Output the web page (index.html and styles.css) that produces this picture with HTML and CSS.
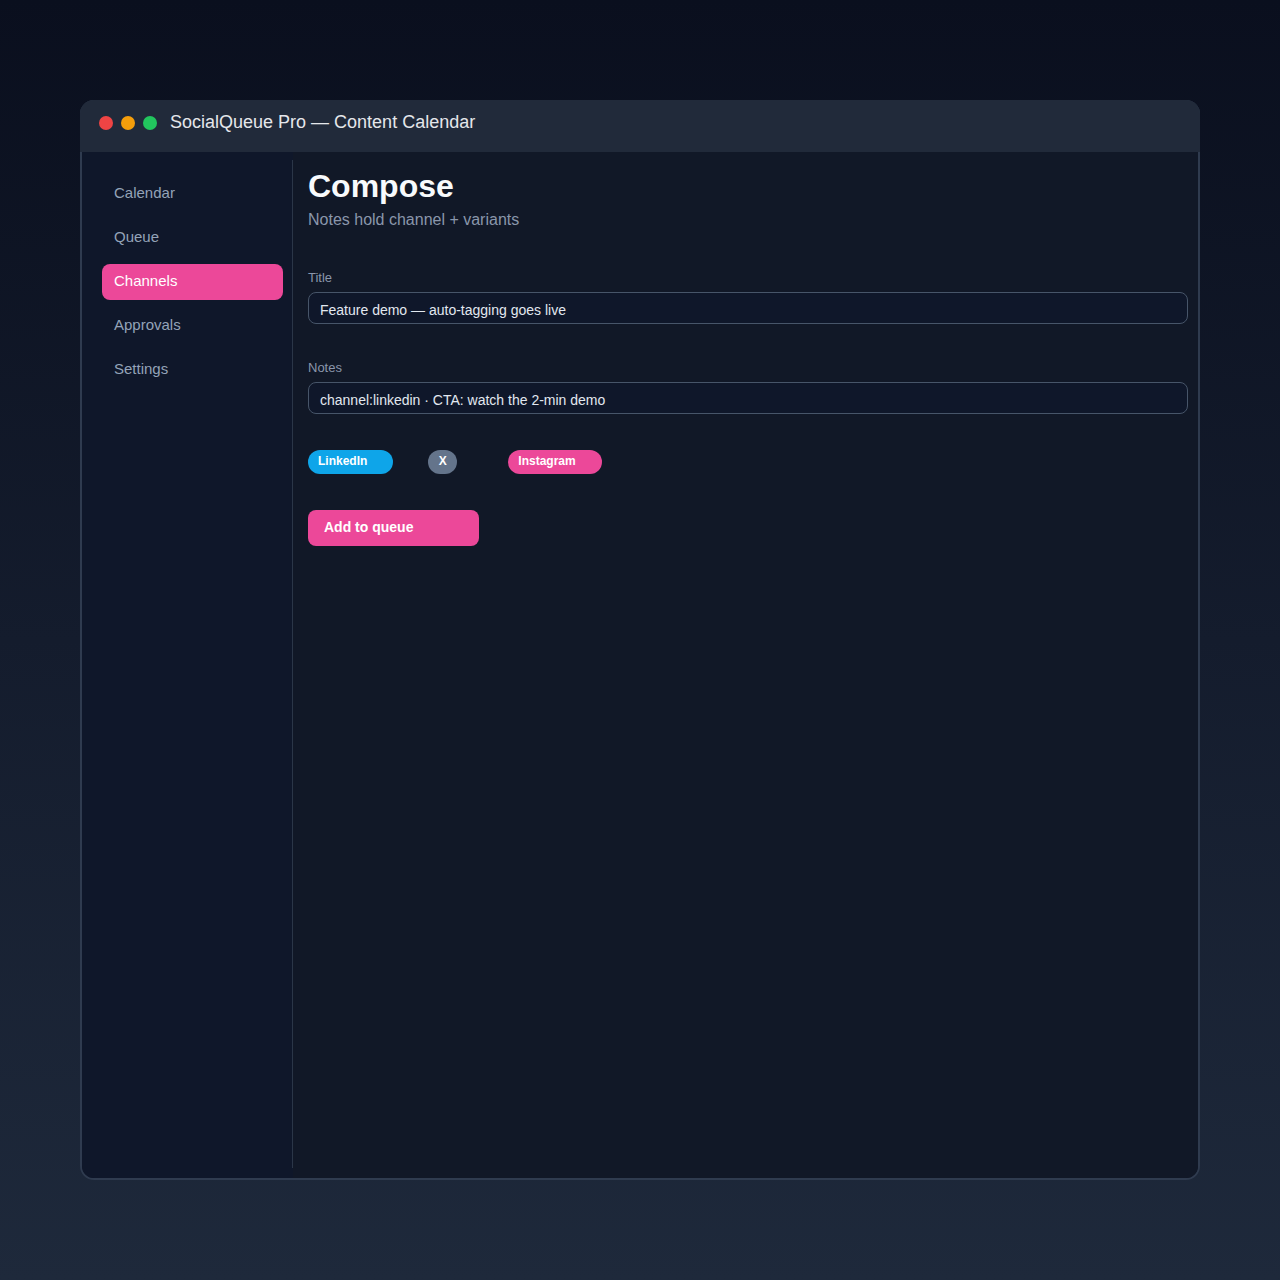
FILE: index.html
```html
<!DOCTYPE html>
<html lang="en">
<head>
<meta charset="utf-8">
<title>SocialQueue Pro — Content Calendar</title>
<link rel="stylesheet" href="styles.css">
</head>
<body>
<div class="window">
  <div class="titlebar">
    <span class="dot dot-red"></span>
    <span class="dot dot-yellow"></span>
    <span class="dot dot-green"></span>
    <span class="title">SocialQueue Pro — Content Calendar</span>
  </div>
  <div class="window-body">
    <aside class="sidebar">
      <nav class="nav">
        <div class="nav-item">Calendar</div>
        <div class="nav-item">Queue</div>
        <div class="nav-item active">Channels</div>
        <div class="nav-item">Approvals</div>
        <div class="nav-item">Settings</div>
      </nav>
    </aside>
    <main class="main">
      <header class="page-head">
        <h1 class="page-title">Compose</h1>
        <p class="page-sub">Notes hold channel + variants</p>
      </header>
      <div class="field">
        <label class="field-label">Title</label>
        <div class="input">Feature demo — auto-tagging goes live</div>
      </div>
      <div class="field">
        <label class="field-label">Notes</label>
        <div class="input">channel:linkedin · CTA: watch the 2-min demo</div>
      </div>
      <div class="chips">
        <span class="chip chip-linkedin">LinkedIn</span>
        <span class="chip chip-x">X</span>
        <span class="chip chip-instagram">Instagram</span>
      </div>
      <div class="actions">
        <button class="btn-primary">Add to queue</button>
      </div>
    </main>
  </div>
</div>
</body>
</html>
```

FILE: styles.css
```css
* { box-sizing: border-box; }

html, body {
  margin: 0;
  padding: 0;
}

body {
  min-height: 1280px;
  background: linear-gradient(180deg, #0a0f1e 0%, #141c2d 50%, #1e293b 100%);
  font-family: "Liberation Sans", Arial, sans-serif;
  padding-top: 100px;
}

.window {
  width: 1120px;
  height: 1080px;
  margin: 0 auto;
  border: 2px solid #2f3b4f;
  border-radius: 14px;
  background: #111827;
  display: flex;
  flex-direction: column;
  overflow: visible;
}

.titlebar {
  height: 52px;
  margin: -2px -2px 0;
  border-radius: 14px 14px 0 0;
  background: #212a3a;
  display: flex;
  align-items: center;
  padding: 0 0 7px 19px;
  flex-shrink: 0;
}

.dot {
  width: 14px;
  height: 14px;
  border-radius: 50%;
  margin-right: 8px;
}
.dot-red { background: #ef4444; }
.dot-yellow { background: #f59e0b; }
.dot-green { background: #22c55e; margin-right: 13px; }

.title {
  color: #e5e7eb;
  font-size: 18px;
}

.window-body {
  flex: 1;
  display: flex;
  min-height: 0;
  border-radius: 0 0 12px 12px;
  overflow: hidden;
}

.sidebar {
  width: 211px;
  flex-shrink: 0;
  background: #0f172a;
  padding: 8px 0 10px 0;
}

.nav {
  height: 100%;
  border-right: 1px solid #2b3648;
  padding: 16px 9px 0 20px;
  display: flex;
  flex-direction: column;
  gap: 8px;
}

.nav-item {
  height: 36px;
  line-height: 34px;
  padding: 0 12px;
  border-radius: 8px;
  font-size: 15px;
  color: #94a3b8;
}

.nav-item.active {
  background: #ec4899;
  color: #ffffff;
}

.main {
  flex: 1;
  background: #111827;
  padding: 16px 10px 0 15px;
  display: flex;
  flex-direction: column;
}

.page-head {
  margin-bottom: 40px;
}

.page-title {
  margin: 0;
  font-size: 32px;
  line-height: 36px;
  font-weight: 700;
  color: #f8fafc;
}

.page-sub {
  margin: 6px 0 0;
  font-size: 16px;
  line-height: 20px;
  color: #8a96ab;
}

.field {
  display: flex;
  flex-direction: column;
  margin-bottom: 36px;
}

.field-label {
  font-size: 13px;
  line-height: 16px;
  color: #8a96ab;
  margin-bottom: 6px;
}

.input {
  height: 32px;
  border: 1px solid #475569;
  border-radius: 8px;
  background: #0f172a;
  padding: 0 11px;
  font-size: 14px;
  line-height: 34px;
  overflow: hidden;
  color: #e2e8f0;
}

.chips {
  display: flex;
  gap: 35px;
  margin-bottom: 36px;
}

.chip {
  height: 24px;
  border-radius: 12px;
  padding: 3px 26px 5px 10px;
  font-size: 12px;
  line-height: 16px;
  font-weight: 700;
  color: #ffffff;
}

.chip-linkedin { background: #0ea5e9; }
.chip-x {
  background: #64748b;
  padding: 3px 10px 5px 10px;
  margin-right: 16px;
  width: 29px;
  text-align: center;
}
.chip-instagram { background: #ec4899; }

.actions {
  display: flex;
}

.btn-primary {
  width: 171px;
  height: 36px;
  border: none;
  border-radius: 8px;
  background: #ec4899;
  color: #ffffff;
  font-family: "Liberation Sans", Arial, sans-serif;
  font-size: 14px;
  font-weight: 700;
  text-align: left;
  padding: 0 16px 2px;
  cursor: pointer;
}
```
